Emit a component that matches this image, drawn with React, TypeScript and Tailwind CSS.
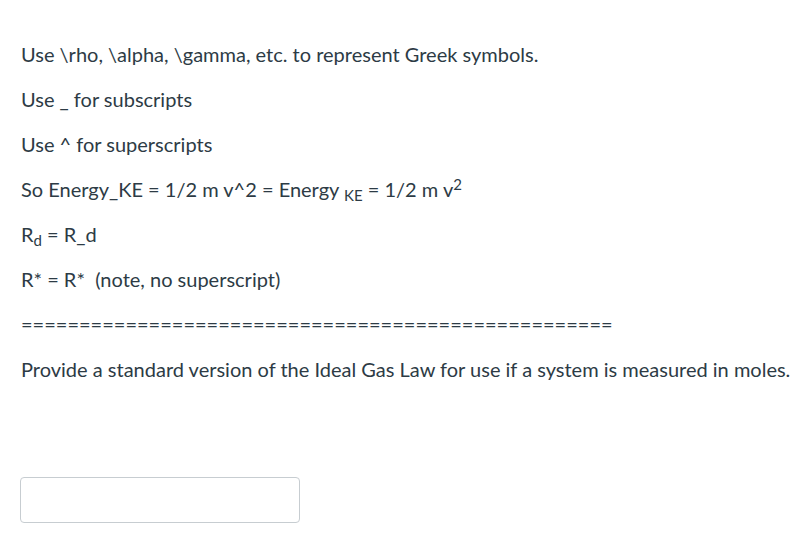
export default function App() {
  return (
    <div
      className="min-h-screen bg-white px-[21px] pt-[42px] text-[20px] leading-[25px] text-[#2d3b45]"
      style={{ fontFamily: "Lato, 'Noto Sans', sans-serif" }}
    >
      <p className="mb-[20px]">Use \rho, \alpha, \gamma, etc. to represent Greek symbols.</p>
      <p className="mb-[20px]">Use _ for subscripts</p>
      <p className="mb-[20px]">Use ^ for superscripts</p>
      <p className="mb-[20px]">
        So Energy_KE = 1/2 m v^2 = Energy <sub className="text-[15px]">KE</sub> = 1/2 m v<sup className="text-[15px]">2</sup>
      </p>
      <p className="mb-[20px]">
        R<sub className="text-[15px]">d</sub> = R_d
      </p>
      <p className="mb-[20px]">R* = R*&nbsp; (note, no superscript)</p>
      <p className="mb-[20px]">{"=".repeat(51)}</p>
      <p className="whitespace-nowrap">Provide a standard version of the Ideal Gas Law for use if a system is measured in moles.</p>
      <input
        type="text"
        className="-ml-px mt-[95px] block h-[46px] w-[280px] rounded-[4px] border border-[#c7cdd1] bg-white"
      />
    </div>
  );
}
